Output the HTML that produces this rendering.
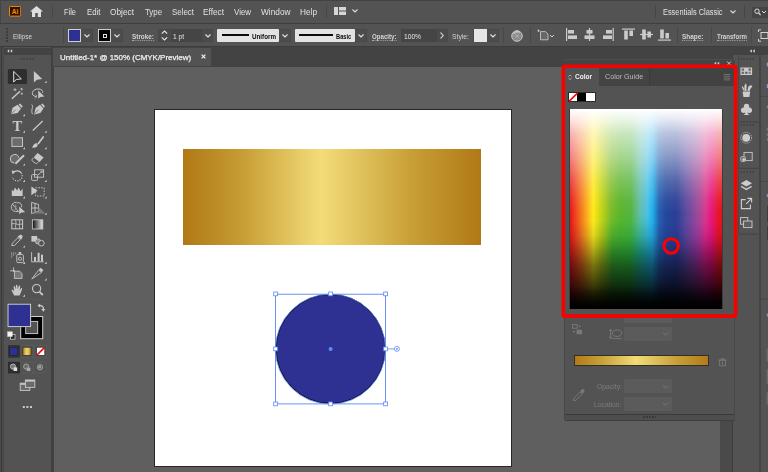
<!DOCTYPE html>
<html lang="en">
<head>
<meta charset="utf-8">
<title>Untitled-1* @ 150% (CMYK/Preview)</title>
<style>
*{box-sizing:border-box;margin:0;padding:0}
html,body{width:768px;height:472px;overflow:hidden;background:#535353}
body{font-family:"Liberation Sans",sans-serif;font-size:10.5px;color:#dcdcdc;position:relative}
.abs{position:absolute}
#app{position:absolute;left:0;top:0;width:768px;height:472px;overflow:hidden;background:#535353}
.t{position:absolute;white-space:nowrap;line-height:12px;height:12px;transform-origin:0 50%}
/* menu bar */
#menubar{left:0;top:0;width:768px;height:23px;background:#535353}
#menubar .t{top:5.5px;font-size:8.5px;color:#e2e2e2}
.vsep{position:absolute;width:1px;background:#464646}
/* control bar */
#ctrl{left:0;top:23px;width:768px;height:24.4px;background:#535353;border-top:1px solid #3e3e3e;border-bottom:1.4px solid #3c3c3c}
#ctrl .t{font-size:7.5px;color:#d4d4d4;top:6.6px}
.dd{position:absolute;top:5px;height:13px;background:#4d4d4d;border-radius:1px;box-shadow:inset 0 0 0 1px #474747}
.chev{position:absolute}
.und{height:10.5px !important;border-bottom:1px dotted #a8a8a8;font-weight:bold;font-size:7px !important;line-height:11.4px !important}
/* toolbar */
#tools{left:0;top:47.3px;width:53.6px;height:426px;background:linear-gradient(90deg,#4a4a4a 0,#4a4a4a 1.2px,#3c3c3c 1.2px,#3c3c3c 2.3px,#494949 2.3px,#494949 3.8px,#535353 3.8px,#535353 51.1px,#414141 51.1px,#414141 53.6px)}
#toolhead{left:3.8px;top:47.5px;width:47.2px;height:7.4px;background:#434343}
/* tab bar */
#tabbar{left:53px;top:47px;width:715px;height:20px;background:#434343}
#doctab{left:53.4px;top:47.5px;width:157.6px;height:18.6px;background:#535353}
/* canvas */
#canvas{left:53.6px;top:67px;width:680px;height:405px;background:#5f5f5f}
#artboard{left:154.2px;top:108.9px;width:358px;height:358.1px;background:#fff;border:1.25px solid #262626}
#goldrect{left:183.3px;top:149px;width:297.7px;height:96.2px;background:linear-gradient(90deg,#b07916 0%,#b27c19 2%,#c79d35 20%,#f3dd79 46.3%,#c9a038 76%,#b27c19 98%,#b07916 100%)}
</style>
</head>
<body>
<div id="app">

<!-- ===== MENU BAR ===== -->
<div id="menubar" class="abs">
  <svg class="abs" style="left:9px;top:6.3px" width="12.2" height="10.6" viewBox="0 0 13 11" preserveAspectRatio="none"><rect x="0.5" y="0.5" width="12" height="10" rx="1" fill="#2e1500" stroke="#ff8a00"/><text x="6.5" y="8.3" font-family="Liberation Sans,sans-serif" font-size="7" font-weight="bold" fill="#ff8a00" text-anchor="middle">Ai</text></svg>
  <svg class="abs" style="left:30px;top:6px" width="13" height="11" viewBox="0 0 13 11"><path d="M6.5 0 L13 5.6 H11 V11 H7.8 V7 H5.2 V11 H2 V5.6 H0 Z" fill="#dedede"/></svg>
  <div class="vsep" style="left:52px;top:5px;height:13px"></div>
  <span class="t" style="left:63.5px;transform:scaleX(0.876)">File</span>
  <span class="t" style="left:86.5px;transform:scaleX(0.921)">Edit</span>
  <span class="t" style="left:110px;transform:scaleX(0.976)">Object</span>
  <span class="t" style="left:144.5px;transform:scaleX(0.922)">Type</span>
  <span class="t" style="left:171.5px;transform:scaleX(0.931)">Select</span>
  <span class="t" style="left:203px;transform:scaleX(0.973)">Effect</span>
  <span class="t" style="left:234px;transform:scaleX(0.93)">View</span>
  <span class="t" style="left:261px;transform:scaleX(0.976)">Window</span>
  <span class="t" style="left:300px;transform:scaleX(0.972)">Help</span>
  <div class="vsep" style="left:326px;top:5px;height:13px"></div>
  <svg class="abs" style="left:334px;top:7px" width="12" height="8" viewBox="0 0 12 8"><rect x="0" y="0" width="4" height="8" fill="#d6d6d6"/><rect x="5" y="0" width="7" height="3.5" fill="#d6d6d6"/><rect x="5" y="4.5" width="7" height="3.5" fill="#d6d6d6"/></svg>
  <svg class="abs" style="left:351.5px;top:9px" width="6" height="4" viewBox="0 0 6 4"><path d="M0.5 0.5 L3 3 L5.5 0.5" fill="none" stroke="#dcdcdc" stroke-width="1.1"/></svg>
  <div class="vsep" style="left:655px;top:5px;height:13px"></div>
  <span class="t" style="left:663px;transform:scaleX(0.869)">Essentials Classic</span>
  <svg class="abs" style="left:729.5px;top:10px" width="6" height="4" viewBox="0 0 6 4"><path d="M0.5 0.5 L3 3 L5.5 0.5" fill="none" stroke="#dcdcdc" stroke-width="1.1"/></svg>
  <div class="vsep" style="left:744px;top:5px;height:13px"></div>
  <div class="abs" style="left:752px;top:7px;width:16px;height:11px;background:#454545;border-radius:1px"></div>
  <svg class="abs" style="left:754px;top:8px" width="14" height="9" viewBox="0 0 14 9"><circle cx="3" cy="3.2" r="2.2" fill="none" stroke="#dcdcdc" stroke-width="1"/><path d="M4.6 4.8 L6.6 7.2" stroke="#dcdcdc" stroke-width="1.2"/><path d="M8 3 L10 5 L12 3" fill="none" stroke="#dcdcdc" stroke-width="1"/></svg>
</div>

<div class="abs" style="left:0;top:0;width:768px;height:1px;background:#434343"></div>
<div class="abs" style="left:0;top:0;width:1px;height:47px;background:#454545"></div>
<div class="abs" style="left:2px;top:24px;width:1px;height:23px;background:#434343"></div>
<!-- ===== CONTROL BAR ===== -->
<div id="ctrl" class="abs">
  <div class="abs" style="left:6px;top:4px;width:2px;height:14px;background:repeating-linear-gradient(180deg,#3c3c3c 0 2px,transparent 2px 3px)"></div>
  <span class="t" style="left:13px;transform:scaleX(0.86)">Ellipse</span>
  <div class="vsep" style="left:63px;top:3px;height:16px;background:#484848"></div>
  <!-- fill -->
  <div class="dd" style="left:68px;width:25px"></div>
  <div class="abs" style="left:68px;top:5px;width:13px;height:13px;background:#2e3192;border:1px solid #cfcfcf"></div>
  <svg class="chev" style="left:84px;top:9.5px" width="6" height="4" viewBox="0 0 6 4"><path d="M0.5 0.5 L3 3 L5.5 0.5" fill="none" stroke="#e4e4e4" stroke-width="1.1"/></svg>
  <!-- stroke -->
  <div class="dd" style="left:98px;width:25px"></div>
  <div class="abs" style="left:98px;top:5px;width:13px;height:13px;background:#000;border:1px solid #cfcfcf"></div>
  <div class="abs" style="left:103px;top:10px;width:4px;height:4px;border:1px solid #e0e0e0"></div>
  <svg class="chev" style="left:114px;top:9.5px" width="6" height="4" viewBox="0 0 6 4"><path d="M0.5 0.5 L3 3 L5.5 0.5" fill="none" stroke="#e4e4e4" stroke-width="1.1"/></svg>
  <span class="t und" style="left:132px;transform:scaleX(0.912)">Stroke:</span>
  <div class="dd" style="left:158px;width:55px;background:#4b4b4b"></div>
  <div class="abs" style="left:171px;top:5px;width:31px;height:13px;background:#454545"></div>
  <svg class="chev" style="left:161px;top:6px" width="7" height="11" viewBox="0 0 7 11"><path d="M0.8 3.6 L3.5 1 L6.2 3.6 M0.8 7.4 L3.5 10 L6.2 7.4" fill="none" stroke="#e4e4e4" stroke-width="1.1"/></svg>
  <span class="t" style="left:173px;color:#e6e6e6;transform:scaleX(0.879)">1 pt</span>
  <svg class="chev" style="left:204.5px;top:9.5px" width="6" height="4" viewBox="0 0 6 4"><path d="M0.5 0.5 L3 3 L5.5 0.5" fill="none" stroke="#e4e4e4" stroke-width="1.1"/></svg>
  <!-- uniform -->
  <div class="dd" style="left:217px;width:74px"></div>
  <div class="abs" style="left:217px;top:5px;width:62px;height:13px;background:#e3e3e3;border-radius:1px"></div>
  <div class="abs" style="left:222px;top:10px;width:27px;height:2px;background:#0c0c0c"></div>
  <span class="t" style="left:251.5px;color:#0a0a0a;font-weight:bold;font-size:7px;transform:scaleX(0.894)">Uniform</span>
  <svg class="chev" style="left:282px;top:9.5px" width="6" height="4" viewBox="0 0 6 4"><path d="M0.5 0.5 L3 3 L5.5 0.5" fill="none" stroke="#e4e4e4" stroke-width="1.1"/></svg>
  <!-- basic -->
  <div class="dd" style="left:295px;width:72px"></div>
  <div class="abs" style="left:295px;top:5px;width:60px;height:13px;background:#e3e3e3;border-radius:1px"></div>
  <div class="abs" style="left:299px;top:10px;width:34px;height:2px;background:#0c0c0c"></div>
  <span class="t" style="left:335.5px;color:#0a0a0a;font-weight:bold;font-size:7px;transform:scaleX(0.82)">Basic</span>
  <svg class="chev" style="left:358px;top:9.5px" width="6" height="4" viewBox="0 0 6 4"><path d="M0.5 0.5 L3 3 L5.5 0.5" fill="none" stroke="#e4e4e4" stroke-width="1.1"/></svg>
  <span class="t und" style="left:372px;transform:scaleX(0.875)">Opacity:</span>
  <div class="dd" style="left:401px;width:47px;background:#4b4b4b"></div>
  <div class="abs" style="left:401px;top:5px;width:36px;height:13px;background:#454545"></div>
  <span class="t" style="left:404px;color:#e6e6e6;transform:scaleX(0.886)">100%</span>
  <svg class="chev" style="left:440px;top:8px" width="4" height="7" viewBox="0 0 4 7"><path d="M0.5 0.5 L3.2 3.5 L0.5 6.5" fill="none" stroke="#e4e4e4" stroke-width="1.1"/></svg>
  <span class="t" style="left:452px;transform:scaleX(0.906)">Style:</span>
  <div class="dd" style="left:473px;width:26px"></div>
  <div class="abs" style="left:473.5px;top:5px;width:13.5px;height:13px;background:#e6e6e6"></div>
  <svg class="chev" style="left:490px;top:9.5px" width="6" height="4" viewBox="0 0 6 4"><path d="M0.5 0.5 L3 3 L5.5 0.5" fill="none" stroke="#e4e4e4" stroke-width="1.1"/></svg>
  <div class="vsep" style="left:503px;top:3px;height:16px;background:#484848"></div>
  <svg class="abs" style="left:510.5px;top:5.5px" width="12" height="12" viewBox="0 0 12 12"><circle cx="6" cy="6" r="5.3" fill="#858585" stroke="#d4d4d4" stroke-width="0.9"/><path d="M6 1 V11 M1 6 H11 M2.5 2.5 L9.5 9.5 M9.5 2.5 L2.5 9.5" stroke="#b8b8b8" stroke-width="0.5"/><path d="M2.5 4 A4.2 4.2 0 0 1 8.5 2.4" stroke="#e6e6e6" stroke-width="1" fill="none"/></svg>
  <div class="vsep" style="left:530px;top:3px;height:16px;background:#484848"></div>
  <svg class="abs" style="left:536.8px;top:4.6px" width="19" height="13" viewBox="0 0 19 13"><path d="M3.5 2.6 H8.3 L11 5.2 V10.8 H3.5 Z" fill="#676767" stroke="#c4c4c4" stroke-width="0.9"/><path d="M1.5 0.5 V3 M0.3 1.8 H2.8" stroke="#cfcfcf" stroke-width="0.8"/><path d="M13 6 L15 8 L17 6" fill="none" stroke="#cfcfcf" stroke-width="1"/></svg>
  <!-- align icons -->
  <svg class="abs" style="left:565.8px;top:4.4px" width="11" height="13" viewBox="0 0 11 13"><rect x="0" y="0" width="1.2" height="13" fill="#cbcbcb"/><rect x="2" y="2" width="6" height="3.6" fill="#cbcbcb"/><rect x="2" y="7.4" width="9" height="3.6" fill="#cbcbcb"/></svg>
  <svg class="abs" style="left:584px;top:4.4px" width="11" height="13" viewBox="0 0 11 13"><rect x="4.9" y="0" width="1.2" height="13" fill="#cbcbcb"/><rect x="2.5" y="2" width="6" height="3.6" fill="#cbcbcb"/><rect x="0.5" y="7.4" width="10" height="3.6" fill="#cbcbcb"/></svg>
  <svg class="abs" style="left:602.4px;top:4.4px" width="12" height="13" viewBox="0 0 12 13"><rect x="10.6" y="0" width="1.2" height="13" fill="#cbcbcb"/><rect x="4" y="2" width="6" height="3.6" fill="#cbcbcb"/><rect x="1" y="7.4" width="9" height="3.6" fill="#cbcbcb"/></svg>
  <svg class="abs" style="left:622px;top:4.4px" width="13" height="13" viewBox="0 0 13 13"><rect x="0" y="0.5" width="13" height="1.2" fill="#cbcbcb"/><rect x="2.2" y="2.5" width="3.6" height="9" fill="#cbcbcb"/><rect x="7.4" y="2.5" width="3.6" height="5.5" fill="#cbcbcb"/></svg>
  <svg class="abs" style="left:640px;top:4.4px" width="13" height="13" viewBox="0 0 13 13"><rect x="0" y="5.9" width="13" height="1.2" fill="#cbcbcb"/><rect x="2.2" y="1.5" width="3.6" height="10" fill="#cbcbcb"/><rect x="7.4" y="3.5" width="3.6" height="6" fill="#cbcbcb"/></svg>
  <svg class="abs" style="left:658px;top:4.4px" width="13" height="13" viewBox="0 0 13 13"><rect x="0" y="11.5" width="13" height="1.2" fill="#cbcbcb"/><rect x="2.2" y="1.5" width="3.6" height="9" fill="#cbcbcb"/><rect x="7.4" y="5" width="3.6" height="5.5" fill="#cbcbcb"/></svg>
  <div class="vsep" style="left:677px;top:3px;height:16px;background:#484848"></div>
  <span class="t und" style="left:682px;transform:scaleX(0.921)">Shape:</span>
  <div class="vsep" style="left:711px;top:3px;height:16px;background:#484848"></div>
  <span class="t und" style="left:717px;transform:scaleX(0.876)">Transform</span>
  <div class="vsep" style="left:751px;top:3px;height:16px;background:#484848"></div>
  <svg class="abs" style="left:758px;top:5px" width="12" height="13" viewBox="0 0 12 13"><rect x="3" y="3.5" width="7" height="6" fill="none" stroke="#d2d2d2" stroke-width="1"/><path d="M0.5 3 V0.8 H3 M0.5 10 V12.2 H3 M10 0.8 H12" fill="none" stroke="#d2d2d2" stroke-width="1"/></svg>
</div>


<!-- ===== TOOLBAR ===== -->
<div id="tools" class="abs"></div>
<div id="toolhead" class="abs"></div>
<svg class="abs" style="left:0;top:46px" width="56" height="426" viewBox="0 46 56 426">
  <g fill="#c9c9c9" stroke="none">
    <!-- header chevrons + gripper -->
    <path d="M9.2 49.2 L7.2 51 L9.2 52.8 Z M12.2 49.2 L10.2 51 L12.2 52.8 Z" fill="#d8d8d8"/>
    <g fill="#454545"><rect x="20" y="58" width="2" height="2"/><rect x="23" y="58" width="2" height="2"/><rect x="26" y="58" width="2" height="2"/><rect x="29" y="58" width="2" height="2"/><rect x="32" y="58" width="2" height="2"/></g>
    <!-- row0 -->
    <rect x="7.8" y="69" width="19.2" height="15" rx="1.5" fill="#2e2e2e"/>
    <path d="M13.7 71.4 V82 L16.3 79.5 L21.3 78.9 Z" fill="none" stroke="#e2e2e2" stroke-width="1" stroke-linejoin="miter"/>
    <path d="M33.9 71 V82.6 L36.9 79.7 L42.2 79 Z"/>
    <path d="M46.7 80.8 V83 H44.5 Z"/>
    <!-- row1 wand / lasso -->
    <path d="M11.9 98.7 L20 91.2" stroke="#c9c9c9" stroke-width="1.5" fill="none"/>
    <path d="M15 88.2 V91.2 M13.5 89.7 H16.5 M21.6 87.8 V90.4 M20.3 89.1 H22.9 M21.8 92.6 V94.8 M20.7 93.7 H22.9" stroke="#c9c9c9" stroke-width="0.8" fill="none"/>
    <path d="M36.3 96.6 C33.6 96.4 31.8 94.6 32.4 92.4 C33 90 36.2 88.6 39 89 C41.6 89.4 43.3 91 42.6 92.8" fill="none" stroke="#c9c9c9" stroke-width="1"/>
    <path d="M35.6 94.6 C37 95.2 36.6 97.4 35 98.6" fill="none" stroke="#c9c9c9" stroke-width="0.8"/>
    <path d="M38.2 90.6 V98.8 L40.2 96.9 L44.4 96.5 Z"/>
    <!-- row2 pen / curvature -->
    <path d="M11 114.2 L12.6 107.8 L17.6 104.8 L21 108.6 L17.6 113 Z"/>
    <path d="M18.6 104.5 L20.2 103.4 L22.8 106.5 L21.5 107.7 Z"/>
    <path d="M11.4 113.8 L15.6 109.6" stroke="#535353" stroke-width="0.7"/>
    <path d="M34 114.4 L35.6 108 L40 104.8 L43.4 108.6 L40.4 113 Z"/>
    <path d="M41 104.5 L42.6 103.4 L45 106.5 L43.8 107.7 Z"/>
    <path d="M34.4 113.8 L38.4 109.8" stroke="#535353" stroke-width="0.7"/>
    <path d="M31.6 104.4 C34.2 106.4 30.2 110.6 32.6 114.2" fill="none" stroke="#c9c9c9" stroke-width="0.9"/>
    <path d="M25 114 V116.2 H22.8 Z"/>
    <!-- row3 T / line -->
    <text transform="translate(17.2 131) scale(0.98 1)" x="0" y="0" text-anchor="middle" font-family="Liberation Serif,serif" font-weight="bold" font-size="14.6" fill="#c9c9c9">T</text>
    <path d="M32.8 130.5 L42.7 121" stroke="#c9c9c9" stroke-width="1.2" fill="none"/>
    <path d="M25 130.6 V132.8 H22.8 Z M46.7 130.6 V132.8 H44.5 Z"/>
    <!-- row4 rect / brush -->
    <rect x="11.9" y="137.8" width="10.6" height="8.6" fill="#6c6c6c" stroke="#c4c4c4" stroke-width="1"/>
    <path d="M43.2 137 L38.4 143.4" stroke="#c9c9c9" stroke-width="1.7" stroke-linecap="round" fill="none"/>
    <path d="M32.2 147.8 C33 144.6 35.2 142.6 37.4 143.4 C38.6 146 36 148 32.2 147.8 Z"/>
    <path d="M25 147 V149.2 H22.8 Z M46.7 147 V149.2 H44.5 Z"/>
    <!-- row5 shaper / eraser -->
    <path d="M14.2 163.2 A4.4 4.4 0 1 1 19 158" fill="#6c6c6c" stroke="#c9c9c9" stroke-width="1"/>
    <path d="M15.4 163.8 L24 155.2" stroke="#c9c9c9" stroke-width="2" fill="none"/>
    <path d="M37.6 153 L43.6 157.4 L39.6 162 L33.6 157.6 Z"/>
    <path d="M33.2 158 L32.2 159.4 C31.8 160 32 160.8 32.6 161.2 L35.6 163.4 C36.2 163.8 37 163.6 37.4 163 L38.6 161.6" fill="none" stroke="#c9c9c9" stroke-width="0.9"/>
    <path d="M25 163.4 V165.6 H22.8 Z M46.7 163.4 V165.6 H44.5 Z"/>
    <!-- row6 rotate / scale -->
    <path d="M14 172 A5 5 0 1 1 12.4 177.2" fill="none" stroke="#c9c9c9" stroke-width="1.1" stroke-dasharray="9 1.2 1.2 1.2 1.2 1.2 1.2 1.2 1.2 1.2 1.2 1.2 1.2 1.2"/>
    <path d="M11.6 170.4 L15.6 171.2 L12.6 174.6 Z"/>
    <rect x="31.6" y="174.6" width="6" height="5.8" rx="0.8" fill="none" stroke="#c9c9c9" stroke-width="0.9"/>
    <rect x="34.6" y="169.8" width="9" height="7.4" fill="none" stroke="#c9c9c9" stroke-width="0.9"/>
    <path d="M38 175 L42 171.4" stroke="#c9c9c9" stroke-width="0.9"/><path d="M42.6 170.8 L42.4 173.2 L40.2 171 Z"/>
    <path d="M25 179.8 V182 H22.8 Z M46.7 179.8 V182 H44.5 Z"/>
    <!-- row7 width / free transform -->
    <path d="M11.8 196 V189.8 L13.4 191.2 L15 187.4 L17 190.6 L18.6 187.4 L20.6 191.2 L22.6 188.6 V196 Z"/>
    <path d="M31.4 186.4 V195.2 L37.6 190.8 Z"/>
    <rect x="35.6" y="187.8" width="8.6" height="8.2" fill="none" stroke="#c9c9c9" stroke-width="0.9" stroke-dasharray="1.6 1.2"/>
    <path d="M25 196.2 V198.4 H22.8 Z M46.7 196.2 V198.4 H44.5 Z"/>
    <!-- row8 shape builder / perspective -->
    <path d="M12.4 204.2 C13.4 202.2 16 201.8 17.6 202.8 C19.4 202.2 21.6 203.6 21.6 205.6 L21.6 207.2 M18.6 211.6 L15.4 211.4 C12.6 211.2 10.8 209 11.4 206.6 C11.6 205.6 11.8 204.8 12.4 204.2 Z" fill="none" stroke="#c9c9c9" stroke-width="0.9"/>
    <path d="M15.6 204.6 V210" stroke="#8e8e8e" stroke-width="1.6"/>
    <path d="M19.2 206.6 V214.2 L21.2 212.4 L25.2 212.2 Z"/>
    <path d="M31.6 202.4 L38.6 204.4 V211.2 L31.6 213.6 Z M35 203.4 V212.4 M31.6 208 H38.6" fill="none" stroke="#c9c9c9" stroke-width="0.9"/>
    <path d="M38.6 207 L45.4 213.6 H31.6 L38.6 211.2 Z" fill="#7a7a7a"/>
    <path d="M46.7 212.6 V214.8 H44.5 Z"/>
    <!-- row9 mesh / gradient -->
    <rect x="11.8" y="219.8" width="10.8" height="9" fill="none" stroke="#c9c9c9" stroke-width="1"/>
    <path d="M11.8 224 C15 222.4 18 226 22.6 223.6 M15.4 219.8 C17.2 223 14.4 226 16 228.8 M19.4 219.8 C20.6 222.6 18.4 226 19.8 228.8" fill="none" stroke="#c9c9c9" stroke-width="0.8"/>
  </g>
  <defs><linearGradient id="gt" x1="0" x2="1" y1="0" y2="0"><stop offset="0" stop-color="#0c0c0c"/><stop offset="1" stop-color="#ededed"/></linearGradient></defs>
  <rect x="32.4" y="219.8" width="10.4" height="9.2" fill="url(#gt)" stroke="#c4c4c4" stroke-width="0.9"/>
  <g fill="#c9c9c9" stroke="none">
    <!-- row10 eyedropper / blend -->
    <path d="M11.8 245.6 L12.2 243.4 L18 237.6 L20.2 239.8 L14.4 245.4 Z" fill="none" stroke="#c9c9c9" stroke-width="0.9"/>
    <path d="M17.6 236.6 L20.4 234.8 C21.4 234.4 22.8 235.6 22.6 236.8 L21.2 239.8 Z"/>
    <path d="M25 245.4 V247.6 H22.8 Z"/>
    <rect x="31.4" y="236" width="5.8" height="5.6"/>
    <circle cx="38" cy="241.4" r="2.6" fill="#8c8c8c" stroke="#c9c9c9" stroke-width="0.8"/>
    <circle cx="41.4" cy="243.2" r="2.8" fill="#535353" stroke="#c9c9c9" stroke-width="0.9"/>
    <!-- row11 sprayer / graph -->
    <rect x="16.8" y="254.6" width="6.6" height="8" rx="1" fill="none" stroke="#c9c9c9" stroke-width="0.9"/>
    <rect x="18.6" y="252" width="2.6" height="2.4"/>
    <circle cx="20" cy="258.8" r="1.6" fill="none" stroke="#c9c9c9" stroke-width="0.9"/>
    <path d="M11.2 252.4 h1 v1 h-1 Z M13.2 252.4 h1 v1 h-1 Z M15.2 252.8 h1 v1 h-1 Z M11.2 254.4 h1 v1 h-1 Z M13.2 254.6 h1 v1 h-1 Z M11.2 256.6 h1 v1 h-1 Z"/>
    <path d="M31.6 252.2 V261.8 H43.8" fill="none" stroke="#c9c9c9" stroke-width="0.9"/>
    <rect x="34" y="257" width="2" height="4.4"/><rect x="37.6" y="252.8" width="2" height="8.6"/><rect x="41" y="254.6" width="2" height="6.8"/>
    <path d="M25 261.8 V264 H22.8 Z M46.7 261.8 V264 H44.5 Z"/>
    <!-- row12 artboard / slice -->
    <path d="M13.6 267.4 V272 M10 270.8 H15.2" fill="none" stroke="#c9c9c9" stroke-width="0.9"/>
    <path d="M14.4 271.2 H19.6 L22 273.6 V278.4 H14.4 Z" fill="#787878" stroke="#c9c9c9" stroke-width="0.9"/>
    <path d="M31.8 279 L38.6 270.2 L41.6 272.4 Z" fill="none" stroke="#c9c9c9" stroke-width="0.9"/>
    <path d="M38.8 269.8 L40.4 267.8 L43.4 270 L41.8 272.2 Z"/>
    <path d="M46.7 278.2 V280.4 H44.5 Z"/>
    <!-- row13 hand / zoom -->
    <path d="M14.2 295.4 L11.6 290.6 C11.4 289.8 12.4 289.4 13 290 L14.2 291.6 L13.6 286.8 C13.6 286 14.8 285.8 15 286.6 L15.8 289.6 L16 285.4 C16 284.6 17.4 284.6 17.4 285.4 L17.6 289.6 L18.8 286 C19 285.2 20.2 285.6 20.2 286.4 L19.6 290.4 L21 288.2 C21.4 287.6 22.4 288 22.2 288.8 L20.8 292.8 C20.4 294 19.8 294.8 19.4 295.6 Z"/>
    <circle cx="36.6" cy="288.6" r="4.1" fill="none" stroke="#c9c9c9" stroke-width="1.1"/>
    <path d="M39.6 291.8 L42.8 295" stroke="#c9c9c9" stroke-width="1.8" fill="none"/>
    <path d="M25 294.6 V296.8 H22.8 Z"/>
    <!-- separator -->
    <rect x="8" y="299" width="39" height="0.8" fill="#595959"/>
    <!-- fill / stroke -->
    <rect x="20.7" y="316.5" width="22" height="22.2" fill="#000" stroke="#d0d0d0" stroke-width="1"/>
    <rect x="25.7" y="321.4" width="12" height="12.2" fill="#535353" stroke="#d0d0d0" stroke-width="0.9"/>
    <rect x="7.2" y="303.4" width="24" height="23.8" fill="#3f3f3f"/>
    <rect x="8" y="304.2" width="22.6" height="22.4" fill="#2e3192" stroke="#cfcfcf" stroke-width="1"/>
    <!-- swap -->
    <path d="M39.6 305.6 C42.4 305.4 43.6 306.8 43.4 309.4" fill="none" stroke="#c9c9c9" stroke-width="1.3"/>
    <path d="M37.4 305.6 L40.2 303.6 V307.8 Z M43.4 311.8 L41.2 309 H45.4 Z"/>
    <!-- default -->
    <rect x="10.4" y="334.4" width="4.6" height="4.8" fill="#222" stroke="#c9c9c9" stroke-width="0.8"/>
    <rect x="7.6" y="331.8" width="4.8" height="4.8" fill="#f4f4f4" stroke="#c9c9c9" stroke-width="0.6"/>
    <!-- color/gradient/none row -->
    <rect x="8" y="345" width="12" height="12.8" fill="#353535"/>
    <path d="M20 345.4 H46.4 V357.6 H20 M33.4 345.4 V357.6" fill="none" stroke="#5d5d5d" stroke-width="0.7"/>
    <rect x="9.6" y="347.2" width="8.2" height="8.2" fill="#2e3192" stroke="#222" stroke-width="0.8"/>
  </g>
  <defs><linearGradient id="gg" x1="0" x2="1" y1="0" y2="0"><stop offset="0" stop-color="#b8861e"/><stop offset="0.5" stop-color="#f2da72"/><stop offset="1" stop-color="#b8861e"/></linearGradient></defs>
  <rect x="22.9" y="347.2" width="8.2" height="8.2" fill="url(#gg)" stroke="#333" stroke-width="0.8"/>
  <rect x="36.6" y="347.2" width="8.2" height="8.2" fill="#fff" stroke="#333" stroke-width="0.8"/>
  <path d="M37 355 L44.4 347.6" stroke="#f00" stroke-width="1.7"/>
  <g fill="#c9c9c9">
    <!-- draw modes -->
    <rect x="8" y="361.8" width="12" height="11.6" fill="#2e2e2e"/>
    <path d="M20 362.2 H46.4 V373 H20 M33.4 362.2 V373" fill="none" stroke="#5d5d5d" stroke-width="0.7"/>
    <circle cx="13" cy="366.6" r="2.6" fill="#777" stroke="#c9c9c9" stroke-width="0.8"/>
    <rect x="13.6" y="367.4" width="3.6" height="3.6" fill="#e0e0e0"/>
    <circle cx="26.2" cy="366.6" r="2.6" fill="#6a6a6a" stroke="#b0b0b0" stroke-width="0.8"/>
    <rect x="26.8" y="367.6" width="3.6" height="3.4" fill="#a8a8a8"/>
    <circle cx="40" cy="367.2" r="2.7" fill="#6a6a6a" stroke="#a8a8a8" stroke-width="0.8"/>
    <rect x="38.4" y="365.8" width="2.6" height="2.4" fill="#a0a0a0"/>
    <!-- screen mode -->
    <rect x="20.2" y="383.2" width="9.6" height="7.2" fill="#6a6a6a" stroke="#c9c9c9" stroke-width="0.9"/>
    <rect x="20.2" y="383.2" width="9.6" height="1.6"/>
    <rect x="25.4" y="380" width="9.4" height="7.4" fill="#6a6a6a" stroke="#c9c9c9" stroke-width="0.9"/>
    <rect x="25.4" y="380" width="9.4" height="1.6"/>
    <!-- dots -->
    <rect x="22.8" y="406" width="2" height="2"/><rect x="26.4" y="406" width="2" height="2"/><rect x="30" y="406" width="2" height="2"/>
  </g>
</svg>

<!-- ===== TAB BAR + CANVAS ===== -->
<div id="tabbar" class="abs"></div>
<div id="doctab" class="abs"></div>
<span class="t abs" style="left:59.5px;top:51.5px;font-size:8px;color:#f0f0f0;-webkit-text-stroke:0.25px #f0f0f0;transform:scaleX(0.995)">Untitled-1* @ 150% (CMYK/Preview)</span>
<svg class="abs" style="left:201.4px;top:54.4px" width="5" height="5" viewBox="0 0 5 5"><path d="M0.6 0.6 L4.4 4.4 M4.4 0.6 L0.6 4.4" stroke="#f0f0f0" stroke-width="1.2"/></svg>

<div id="canvas" class="abs"></div>
<div id="artboard" class="abs"></div>
<div id="goldrect" class="abs"></div>

<!-- circle + selection -->
<svg class="abs" style="left:260px;top:280px" width="160" height="140" viewBox="260 280 160 140">
  <circle cx="330.6" cy="348.9" r="54.5" fill="#2e3192" stroke="#0a0a14" stroke-width="1"/><circle cx="330.4" cy="349.1" r="55" fill="none" stroke="#5a86f2" stroke-width="0.8"/>
  <rect x="275.5" y="294.2" width="110" height="109.7" fill="none" stroke="#5a86f2" stroke-width="0.9"/>
  <g fill="#fff" stroke="#5a86f2" stroke-width="0.8">
    <rect x="273.7" y="292" width="3.8" height="3.8"/><rect x="328.7" y="292" width="3.8" height="3.8"/><rect x="383.7" y="292" width="3.8" height="3.8"/>
    <rect x="273.7" y="347" width="3.8" height="3.8"/><rect x="383.7" y="347" width="3.8" height="3.8"/>
    <rect x="273.7" y="402" width="3.8" height="3.8"/><rect x="328.7" y="402" width="3.8" height="3.8"/><rect x="383.7" y="402" width="3.8" height="3.8"/>
  </g>
  <circle cx="330.6" cy="348.9" r="2" fill="#5b8cff"/>
  <path d="M387.5 348.9 H394.5" stroke="#5a86f2" stroke-width="0.8"/>
  <circle cx="396.9" cy="348.9" r="2.5" fill="#fff" stroke="#5a86f2" stroke-width="0.8"/>
  <circle cx="396.9" cy="348.9" r="0.9" fill="#5a86f2"/>
</svg>

<!-- ===== RIGHT DOCK ===== -->
<div class="abs" style="left:720px;top:66px;width:12px;height:406px;background:#4a4a4a"></div>
<div class="abs" style="left:732px;top:46px;width:36px;height:9px;background:#424242"></div>
<div class="abs" style="left:732px;top:55px;width:36px;height:417px;background:#535353;border-left:1.5px solid #3c3c3c"></div>
<div class="abs" style="left:737.5px;top:56px;width:21px;height:178px;background:#535353;border-left:1px solid #484848"></div>
<div class="abs" style="left:758.5px;top:55px;width:2.6px;height:417px;background:#444"></div>
<svg class="abs" style="left:732px;top:46px" width="36" height="426" viewBox="732 46 36 426">
  <path d="M751.8 49.2 L749.8 51 L751.8 52.8 Z M754.8 49.2 L752.8 51 L754.8 52.8 Z" fill="#d8d8d8"/>
  <g fill="#464646">
    <rect x="740" y="58" width="2" height="2"/><rect x="743" y="58" width="2" height="2"/><rect x="746" y="58" width="2" height="2"/><rect x="749" y="58" width="2" height="2"/><rect x="752" y="58" width="2" height="2"/>
    <rect x="740" y="124" width="2" height="2"/><rect x="743" y="124" width="2" height="2"/><rect x="746" y="124" width="2" height="2"/><rect x="749" y="124" width="2" height="2"/><rect x="752" y="124" width="2" height="2"/>
    <rect x="740" y="171" width="2" height="2"/><rect x="743" y="171" width="2" height="2"/><rect x="746" y="171" width="2" height="2"/><rect x="749" y="171" width="2" height="2"/><rect x="752" y="171" width="2" height="2"/>
    <rect x="738.5" y="121.2" width="20" height="1.2" fill="#454545"/>
    <rect x="738.5" y="167.8" width="20" height="1.2" fill="#454545"/>
    <rect x="738.5" y="233.6" width="20" height="1.3" fill="#474747"/>
  </g>
  <g fill="#cdcdcd">
    <!-- swatches -->
    <rect x="740.4" y="67.4" width="11.7" height="7.6" rx="0.8" fill="#cecece"/>
    <g fill="#6a6a6a"><rect x="741.5" y="68.5" width="2.6" height="2.2"/><rect x="748.4" y="68.5" width="2.6" height="2.2"/><rect x="741.5" y="71.7" width="2.6" height="2.2"/><rect x="745" y="71.7" width="2.6" height="2.2"/><rect x="748.4" y="71.7" width="2.6" height="2.2" fill="#8a8a8a"/></g>
    <!-- brushes -->
    <path d="M742.6 91.4 H750.2 L749.4 97 H743.4 Z"/>
    <path d="M744.4 91 V86.4 C744.4 85 745.6 83.8 746 83.6 C746.6 84.6 746.8 86 746.4 91 Z M747.4 91 L748.4 86.4 L751 85 L752.4 86.4 L751 88 L749.4 91 Z M743.6 91 L741.8 87 L742.8 86.2 L744.2 89 Z"/>
    <!-- symbols (club) -->
    <circle cx="746.5" cy="106.4" r="2.7"/><circle cx="743.7" cy="110.2" r="2.7"/><circle cx="749.3" cy="110.2" r="2.7"/>
    <path d="M745.7 109 H747.3 L747.9 113.8 L749.4 114.9 H743.6 L745.1 113.8 Z"/>
    <!-- appearance -->
    <circle cx="746.2" cy="137.8" r="3.9"/>
    <circle cx="746.2" cy="137.8" r="5.4" fill="none" stroke="#cdcdcd" stroke-width="0.9" stroke-dasharray="1 1"/>
    <!-- graphic styles -->
    <rect x="744" y="152.4" width="8.2" height="8.2" fill="#595959" stroke="#c6c6c6" stroke-width="0.9"/>
    <rect x="740.8" y="156.8" width="4.6" height="4.6" rx="1" fill="#535353" stroke="#cdcdcd" stroke-width="0.9"/>
    <circle cx="743.6" cy="159.4" r="1.5" fill="#cdcdcd"/>
    <!-- layers -->
    <path d="M746.4 180 L752 183.2 L746.4 186.4 L740.8 183.2 Z"/>
    <path d="M741.2 186.4 L746.4 189.4 L751.6 186.4" fill="none" stroke="#cdcdcd" stroke-width="1.4"/>
    <!-- export -->
    <path d="M745.6 199.6 H741.4 V208.6 H750.4 V204.4" fill="none" stroke="#cdcdcd" stroke-width="1.1"/>
    <path d="M746.2 203.8 L751.4 198.6 M747.4 198.4 H751.6 V202.6" fill="none" stroke="#cdcdcd" stroke-width="1.1"/>
    <!-- artboards -->
    <rect x="740.6" y="217.6" width="7.2" height="6.6" fill="#535353" stroke="#cdcdcd" stroke-width="0.9"/>
    <rect x="743.6" y="221" width="8.4" height="6.6" fill="#5e5e5e" stroke="#cdcdcd" stroke-width="0.9"/>
  </g>
  <!-- far right partially-visible column bits -->
  <rect x="766.8" y="62.6" width="1.2" height="3.8" fill="#8fb4ff" opacity="0.8"/><rect x="766.8" y="84.2" width="1.2" height="3.8" fill="#8fb4ff" opacity="0.8"/><rect x="766.8" y="105.6" width="1.2" height="2.6" fill="#8fb4ff" opacity="0.5"/><rect x="761" y="96" width="7" height="1" fill="#484848"/>
  <rect x="766.5" y="348.6" width="1.5" height="12.8" fill="#6a6a6a"/><rect x="766.5" y="369.3" width="1.5" height="14.9" fill="#6a6a6a"/><rect x="766.5" y="392.4" width="1.5" height="12.2" fill="#6a6a6a"/>
  <rect x="761" y="181" width="7" height="1" fill="#484848"/><rect x="761" y="298.6" width="7" height="1" fill="#484848"/>
  <rect x="766.8" y="194" width="1.2" height="3" fill="#8fb4ff" opacity="0.7"/><rect x="766.8" y="313.6" width="1.2" height="3" fill="#8fb4ff" opacity="0.7"/>
  <rect x="766.8" y="127.6" width="1.2" height="3.2" fill="#727272"/><rect x="766.8" y="132.8" width="1.2" height="3.2" fill="#727272"/><rect x="766.8" y="138" width="1.2" height="3" fill="#727272"/><rect x="767" y="206" width="1" height="16" fill="#3c3c3c"/><rect x="767" y="226" width="1" height="14" fill="#3c3c3c"/>
</svg>

<!-- ===== FLOATING PANEL ===== -->
<div class="abs" style="left:564.5px;top:59px;width:170.5px;height:356px;background:#535353;border-radius:2px 2px 0 0"></div>
<div class="abs" style="left:564.5px;top:58.8px;width:170.5px;height:9.2px;background:#444;border-top:1px solid #4e4e4e;border-radius:2px 2px 0 0"></div>
<div class="abs" style="left:564.5px;top:68px;width:170.5px;height:18px;background:#424242"></div>
<div class="abs" style="left:564.5px;top:68px;width:34.5px;height:18px;background:#535353"></div>
<div class="abs" style="left:599px;top:68px;width:50.6px;height:17.4px;background:#444;border-right:1.2px solid #3a3a3a"></div>
<span class="t" style="left:575px;top:71px;font-size:8px;font-weight:bold;color:#f2f2f2;transform:scaleX(0.814)">Color</span>
<span class="t" style="left:605px;top:71px;font-size:8px;color:#bcbcbc;transform:scaleX(0.893)">Color Guide</span>
<svg class="abs" style="left:564px;top:59px" width="172" height="30" viewBox="564 59 172 30">
  <path d="M716.2 61.4 L714.2 63.2 L716.2 65 Z M719.2 61.4 L717.2 63.2 L719.2 65 Z" fill="#c8c8c8"/>
  <path d="M727 61.4 L731 65.4 M731 61.4 L727 65.4" stroke="#c8c8c8" stroke-width="1"/>
  <path d="M568.5 76.4 L570 75 L571.5 76.4 M568.5 78.2 L570 79.6 L571.5 78.2" fill="none" stroke="#c8c8c8" stroke-width="0.8"/>
  <path d="M723.6 74.5 H730.2 M723.6 76.3 H730.2 M723.6 78.1 H730.2 M723.6 79.9 H730.2" stroke="#767676" stroke-width="0.9"/>
</svg>
<!-- none/black/white -->
<div class="abs" style="left:568.2px;top:92.4px;width:27.4px;height:9.6px;background:#2a2a2a"></div>
<div class="abs" style="left:568.8px;top:93px;width:8.6px;height:8.4px;background:#fff"></div>
<div class="abs" style="left:577.4px;top:93px;width:9px;height:8.4px;background:#000"></div>
<div class="abs" style="left:586.4px;top:93px;width:8.6px;height:8.4px;background:#fff"></div>
<svg class="abs" style="left:568.8px;top:93px" width="9" height="9" viewBox="0 0 9 9"><path d="M0 8.4 L8.6 0" stroke="#f00" stroke-width="1.6"/></svg>
<!-- spectrum -->
<div class="abs" style="left:569.4px;top:108.6px;width:153.2px;height:200.6px;background:#3c3c3c"></div>
<div id="spectrum" class="abs" style="left:570px;top:109.2px;width:152px;height:199.4px;background:linear-gradient(90deg,#e8141c 0%,#ee5a20 6%,#f5ea20 15.5%,#a8c81c 21%,#3cb835 28%,#2fba3c 39%,#1fb3a2 47%,#1eaae0 54%,#2560b4 58.5%,#2848a8 63%,#2e3e9c 70%,#5a44a4 76%,#a234a4 84%,#dc208c 89%,#e6107c 93%,#e8141c 98.5%,#e8141c 100%)"></div>
<div class="abs" style="left:570px;top:109.2px;width:152px;height:199.4px;-webkit-mask-image:linear-gradient(180deg,#000 0%,#000 52%,rgba(0,0,0,0) 72%);mask-image:linear-gradient(180deg,#000 0%,#000 52%,rgba(0,0,0,0) 72%);background:linear-gradient(90deg,#e8141c 0%,#f5821f 8%,#ffe91a 15.3%,#cdd614 20%,#7dbb2a 27%,#5cb52a 33%,#55b340 40%,#62bea6 46%,#4cc0e6 51%,#1eaee8 54.5%,#2560b0 58.5%,#24479a 63%,#2b3f95 70%,#5a4a9e 76%,#9c4a9a 84%,#d63a8c 89%,#e6187e 93%,#e8141c 98.5%,#e8141c 100%)"></div>
<div class="abs" style="left:570px;top:109.2px;width:152px;height:199.4px;background:
 linear-gradient(180deg,rgba(0,0,0,0) 56%,rgba(0,0,0,0.08) 63%,rgba(0,0,0,0.2) 68%,rgba(0,0,0,0.35) 73%,rgba(0,0,0,0.5) 78%,rgba(0,0,0,0.62) 83%,rgba(0,0,0,0.74) 88%,rgba(0,0,0,0.87) 92%,rgba(0,0,0,0.97) 96.5%,rgba(0,0,0,1) 100%),
 linear-gradient(180deg,rgba(255,255,255,1) 0%,rgba(255,255,255,0.86) 6%,rgba(255,255,255,0.68) 12%,rgba(255,255,255,0.45) 24%,rgba(255,255,255,0.2) 36%,rgba(255,255,255,0.06) 45%,rgba(255,255,255,0) 52%)"></div>
<svg class="abs" style="left:655px;top:230px" width="32" height="32" viewBox="655 230 32 32"><circle cx="671.2" cy="246" r="7.2" fill="none" stroke="#f00" stroke-width="3"/></svg>

<!-- gradient panel (below) -->
<div class="abs" style="left:624px;top:318px;width:48px;height:5px;background:#5b5b5b"></div>
<div class="abs" style="left:624px;top:326.8px;width:48px;height:13.8px;background:#5b5b5b;border-radius:1px"></div>
<div class="abs" style="left:624px;top:379.4px;width:48px;height:13.6px;background:#5b5b5b;border-radius:1px"></div>
<div class="abs" style="left:624px;top:397px;width:48px;height:13.8px;background:#5b5b5b;border-radius:1px"></div>
<span class="t" style="left:596.6px;top:381px;font-size:7.5px;color:#7c7c7c;transform:scaleX(0.909)">Opacity:</span>
<span class="t" style="left:594.2px;top:398.8px;font-size:7.5px;color:#7c7c7c;transform:scaleX(0.903)">Location:</span>
<div class="abs" style="left:574px;top:354.6px;width:135.4px;height:11.4px;background:#2f2f2f"></div>
<div class="abs" style="left:575px;top:355.6px;width:133.4px;height:9.4px;background:linear-gradient(90deg,#b27b17 0%,#c9a038 20%,#f2dc78 46%,#c9a038 76%,#b27b17 100%)"></div>
<svg class="abs" style="left:564px;top:318px" width="172" height="104" viewBox="564 318 172 104">
  <g fill="none" stroke="#7a7a7a" stroke-width="0.9">
    <rect x="572.6" y="324.6" width="4.6" height="3.6"/><path d="M578.4 325.6 H581 L579.7 327.4 Z" fill="#7a7a7a" stroke="none"/>
    <rect x="577" y="330.2" width="4.6" height="3.6" fill="#7a7a7a"/><path d="M572.4 331 H575.4 L573.9 332.8 Z" fill="#7a7a7a" stroke="none"/>
    <ellipse cx="617" cy="333.2" rx="4.6" ry="3.2"/><path d="M612.2 338.6 H621.8 M610.6 329.4 V338.4 M609.2 331 L610.6 329.2 L612 331 M609.2 336.8 L610.6 338.6 L612 336.8"/>
    <path d="M663 332.6 L665.6 335 L668.2 332.6"/>
    <path d="M663 385.6 L665.6 388 L668.2 385.6"/>
    <path d="M663 402.8 L665.6 405.2 L668.2 402.8"/>
    <path d="M719.4 360 H725.6 V365.8 H719.4 Z M718.6 360 H726.4 M721.2 358.6 H723.8 M722.5 361.6 V364.4"/>
    <path d="M573.4 400.6 L574 398.2 L580.2 392 L582.2 394 L576 400.2 Z"/>
    <path d="M580 391 L582.4 389.2 C583.6 388.8 584.8 390 584.4 391.2 L583 393.8 Z" fill="#7a7a7a" stroke="none"/>
  </g>
</svg>
<div class="abs" style="left:564.5px;top:414px;width:170.5px;height:6.5px;background:#4e4e4e;border-top:1.2px solid #3a3a3a;border-bottom:1px solid #3e3e3e"></div>
<div class="abs" style="left:643px;top:416.4px;width:13px;height:2px;background:repeating-linear-gradient(90deg,#3a3a3a 0 2px,transparent 2px 3px)"></div>
<div class="abs" style="left:564px;top:59px;width:1px;height:361px;background:#474747"></div>
<div class="abs" style="left:734.4px;top:318px;width:1px;height:103px;background:#484848"></div>
<!-- red annotation -->
<svg class="abs" style="left:556px;top:60px" width="186" height="262" viewBox="556 60 186 262"><rect x="563.35" y="66.25" width="172.2" height="249.9" rx="1.2" fill="none" stroke="#f60000" stroke-width="3.7"/></svg>

</div>
</body>
</html>
